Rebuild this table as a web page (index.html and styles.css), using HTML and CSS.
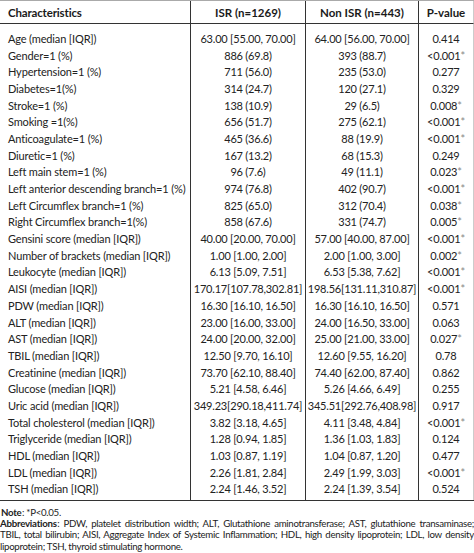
FILE: index.html
```html
<!DOCTYPE html>
<html>
<head>
<meta charset="utf-8">
<link rel="stylesheet" href="styles.css">
</head>
<body>
<div class="tbl">
<div class="row head"><div class="c1">Characteristics</div><div>ISR (n=1269)</div><div>Non ISR (n=443)</div><div>P-value</div></div>
<div class="row first"><div class="c1">Age (median [IQR])</div><div>63.00 [55.00, 70.00]</div><div>64.00 [56.00, 70.00]</div><div>0.414</div></div>
<div class="row"><div class="c1">Gender=1 (%)</div><div>886 (69.8)</div><div>393 (88.7)</div><div>&lt;0.001<span class="ast">*</span></div></div>
<div class="row"><div class="c1">Hypertension=1 (%)</div><div>711 (56.0)</div><div>235 (53.0)</div><div>0.277</div></div>
<div class="row"><div class="c1">Diabetes=1(%)</div><div>314 (24.7)</div><div>120 (27.1)</div><div>0.329</div></div>
<div class="row"><div class="c1">Stroke=1 (%)</div><div>138 (10.9)</div><div>29 (6.5)</div><div>0.008<span class="ast">*</span></div></div>
<div class="row"><div class="c1">Smoking =1(%)</div><div>656 (51.7)</div><div>275 (62.1)</div><div>&lt;0.001<span class="ast">*</span></div></div>
<div class="row"><div class="c1">Anticoagulate=1 (%)</div><div>465 (36.6)</div><div>88 (19.9)</div><div>&lt;0.001<span class="ast">*</span></div></div>
<div class="row"><div class="c1">Diuretic=1 (%)</div><div>167 (13.2)</div><div>68 (15.3)</div><div>0.249</div></div>
<div class="row"><div class="c1">Left main stem=1 (%)</div><div>96 (7.6)</div><div>49 (11.1)</div><div>0.023<span class="ast">*</span></div></div>
<div class="row"><div class="c1">Left anterior descending branch=1 (%)</div><div>974 (76.8)</div><div>402 (90.7)</div><div>&lt;0.001<span class="ast">*</span></div></div>
<div class="row"><div class="c1">Left Circumflex branch=1 (%)</div><div>825 (65.0)</div><div>312 (70.4)</div><div>0.038<span class="ast">*</span></div></div>
<div class="row"><div class="c1">Right Circumflex branch=1(%)</div><div>858 (67.6)</div><div>331 (74.7)</div><div>0.005<span class="ast">*</span></div></div>
<div class="row"><div class="c1">Gensini score (median [IQR])</div><div>40.00 [20.00, 70.00]</div><div>57.00 [40.00, 87.00]</div><div>&lt;0.001<span class="ast">*</span></div></div>
<div class="row"><div class="c1">Number of brackets (median [IQR])</div><div>1.00 [1.00, 2.00]</div><div>2.00 [1.00, 3.00]</div><div>0.002<span class="ast">*</span></div></div>
<div class="row"><div class="c1">Leukocyte (median [IQR])</div><div>6.13 [5.09, 7.51]</div><div>6.53 [5.38, 7.62]</div><div>&lt;0.001<span class="ast">*</span></div></div>
<div class="row"><div class="c1">AISI (median [IQR])</div><div>170.17[107.78,302.81]</div><div>198.56[131.11,310.87]</div><div>&lt;0.001<span class="ast">*</span></div></div>
<div class="row"><div class="c1">PDW (median [IQR])</div><div>16.30 [16.10, 16.50]</div><div>16.30 [16.10, 16.50]</div><div>0.571</div></div>
<div class="row"><div class="c1">ALT (median [IQR])</div><div>23.00 [16.00, 33.00]</div><div>24.00 [16.50, 33.00]</div><div>0.063</div></div>
<div class="row"><div class="c1">AST (median [IQR])</div><div>24.00 [20.00, 32.00]</div><div>25.00 [21.00, 33.00]</div><div>0.027<span class="ast">*</span></div></div>
<div class="row"><div class="c1">TBIL (median [IQR])</div><div>12.50 [9.70, 16.10]</div><div>12.60 [9.55, 16.20]</div><div>0.78</div></div>
<div class="row"><div class="c1">Creatinine (median [IQR])</div><div>73.70 [62.10, 88.40]</div><div>74.40 [62.00, 87.40]</div><div>0.862</div></div>
<div class="row"><div class="c1">Glucose (median [IQR])</div><div>5.21 [4.58, 6.46]</div><div>5.26 [4.66, 6.49]</div><div>0.255</div></div>
<div class="row"><div class="c1">Uric acid (median [IQR])</div><div>349.23[290.18,411.74]</div><div>345.51[292.76,408.98]</div><div>0.917</div></div>
<div class="row"><div class="c1">Total cholesterol (median [IQR])</div><div>3.82 [3.18, 4.65]</div><div>4.11 [3.48, 4.84]</div><div>&lt;0.001<span class="ast">*</span></div></div>
<div class="row"><div class="c1">Triglyceride (median [IQR])</div><div>1.28 [0.94, 1.85]</div><div>1.36 [1.03, 1.83]</div><div>0.124</div></div>
<div class="row"><div class="c1">HDL (median [IQR])</div><div>1.03 [0.87, 1.19]</div><div>1.04 [0.87, 1.20]</div><div>0.477</div></div>
<div class="row"><div class="c1">LDL (median [IQR])</div><div>2.26 [1.81, 2.84]</div><div>2.49 [1.99, 3.03]</div><div>&lt;0.001<span class="ast">*</span></div></div>
<div class="row last"><div class="c1">TSH (median [IQR])</div><div>2.24 [1.46, 3.52]</div><div>2.24 [1.39, 3.54]</div><div>0.524</div></div>
</div>
<div class="notes">
<p class="note"><b>Note</b>: *P&lt;0.05.</p>
<p class="abbr"><b>Abbreviations</b>: PDW, platelet distribution width; ALT, Glutathione aminotransferase; AST, glutathione transaminase; TBIL, total bilirubin; AISI, Aggregate Index of Systemic Inflammation; HDL, high density lipoprotein; LDL, low density lipoprotein; TSH, thyroid stimulating hormone.</p>
</div>
</body>
</html>
```

FILE: styles.css
```css
html, body {
  margin: 0;
  padding: 0;
  background: #fff;
}
body {
  font-family: "Lato", "Open Sans", "Liberation Sans", sans-serif;
  color: #222;
  width: 474px;
}
.tbl {
  display: grid;
  grid-template-columns: 190px 115px 113px 56px;
  grid-template-rows: 23px 22.7px repeat(26, 16.7px) 19.3px;
  width: 474px;
  font-size: 11px;
  border-top: 1px solid #aaa;
  border-bottom: 1px solid #333;
}
.row {
  display: contents;
}
.row > div {
  display: flex;
  align-items: center;
  justify-content: center;
  white-space: nowrap;
  border-left: 1px solid #333;
  letter-spacing: -0.2px;
}
.row > div:nth-child(4) {
  border-right: 1px solid #ccc;
}
.row > div.c1 {
  justify-content: flex-start;
  padding-left: 8px;
  border-left: none;
  letter-spacing: -0.15px;
}
.first > div {
  padding-top: 6px;
}
.last > div {
  padding-bottom: 2.6px;
}
.head > div {
  font-weight: bold;
  font-size: 11.5px;
  color: #1a1a1a;
  border-bottom: 1px solid #333;
  letter-spacing: 0;
}
.ast {
  color: #888;
}
.notes {
  padding-top: 5px;
  font-size: 9.7px;
  color: #222;
  letter-spacing: -0.3px;
}
.notes p {
  margin: 0;
}
.notes b {
  letter-spacing: -0.25px;
  padding-right: 0.5px;
}
.note {
  line-height: 12px;
  padding-left: 1px;
}
.abbr {
  margin-top: 3px;
  line-height: 11.5px;
  text-align: justify;
}
```
